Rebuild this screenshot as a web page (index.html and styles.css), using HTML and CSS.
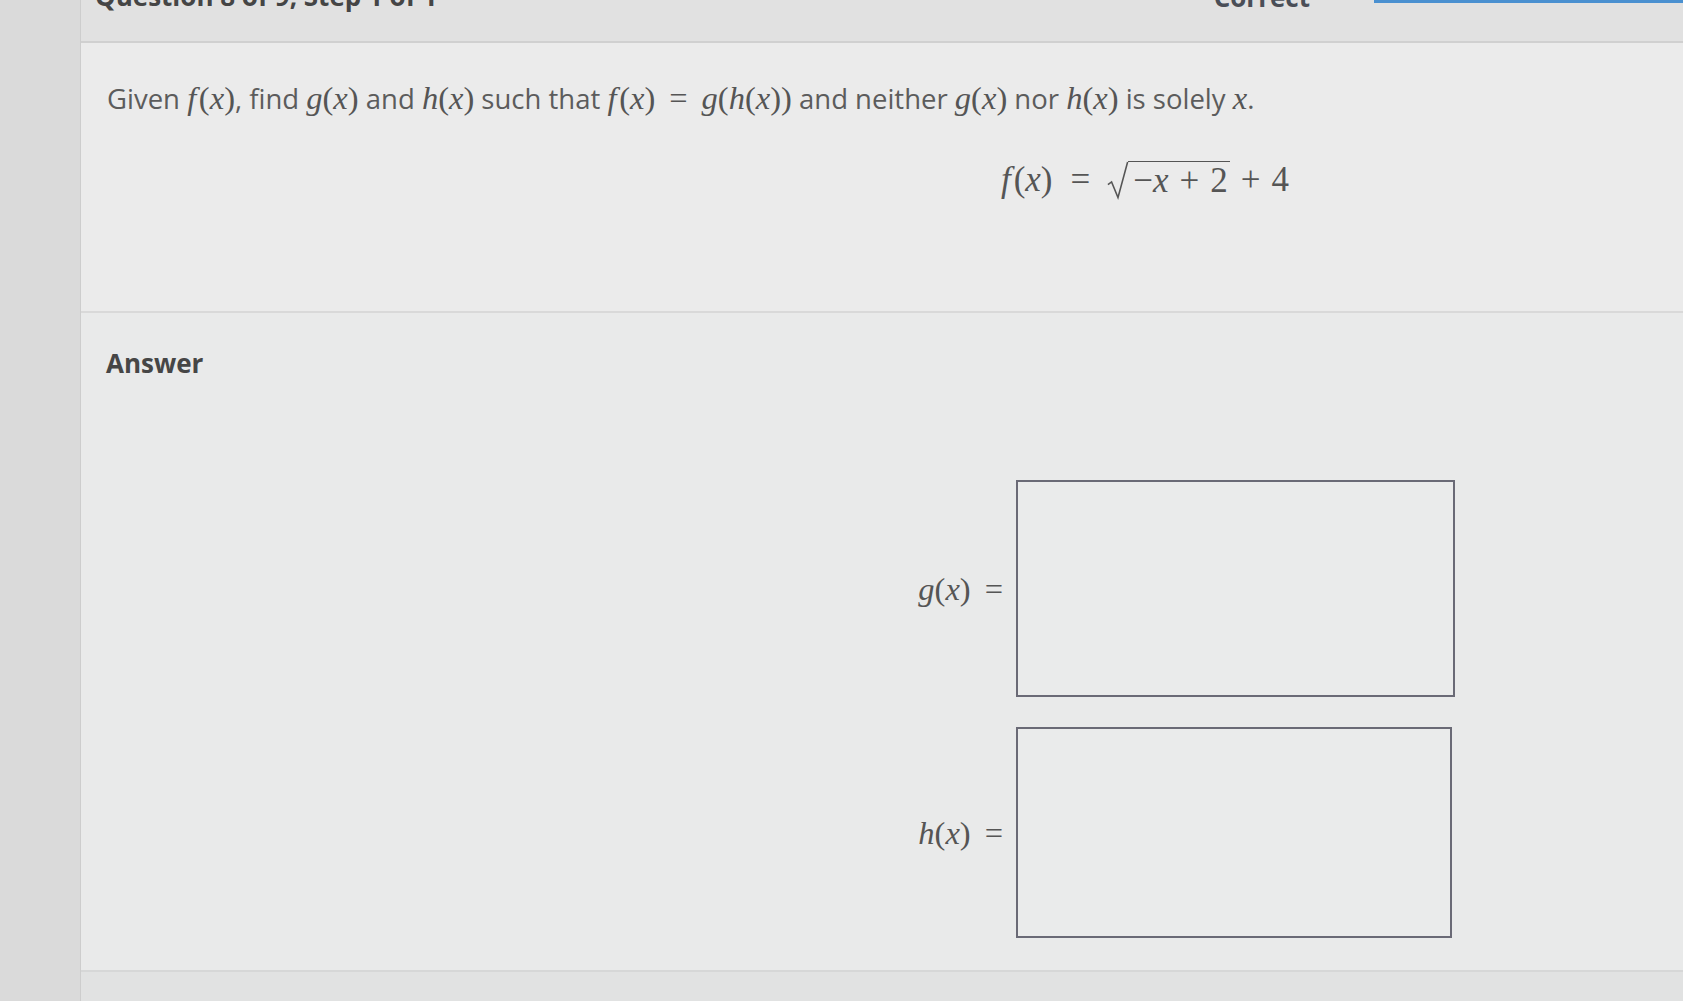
FILE: index.html
```html
<!DOCTYPE html>
<html lang="en">
<head>
<meta charset="utf-8">
<title>Question 8 of 9</title>
<link rel="stylesheet" href="styles.css">
</head>
<body>
<div class="page">
  <aside class="rail"></aside>
  <main class="main">
    <header class="topbar">
      <span class="qtitle">Question 8 of 9, Step 1 of 1</span>
      <span class="status">Correct</span>
      <span class="progress"></span>
    </header>
    <section class="question">
      <p class="prompt">Given <span class="m"><i>f</i>&#8202;(<i>x</i>)</span>, find <span class="m"><i>g</i>(<i>x</i>)</span> and <span class="m"><i>h</i>(<i>x</i>)</span> such that <span class="m"><i>f</i>&#8202;(<i>x</i>)<span class="op">=</span><i>g</i>(<i>h</i>(<i>x</i>))</span> and neither <span class="m"><i>g</i>(<i>x</i>)</span> nor <span class="m"><i>h</i>(<i>x</i>)</span> is solely <span class="m"><i>x</i></span>.</p>
      <div class="formula m">
        <span><i>f</i>&#8202;(<i>x</i>)</span>
        <span class="op">=</span>
        <span class="sqrt"><svg class="rad" viewBox="0 0 24 44" width="22" height="42" aria-hidden="true"><path d="M1 26 L5 23 L12 40 L22.5 1.2" fill="none" stroke="#555" stroke-width="1.7" stroke-linejoin="miter"/></svg><span class="radicand">&minus;<i>x</i><span class="bop">+</span>2</span></span>
        <span><span class="bop">+</span>4</span>
      </div>
    </section>
    <section class="answer">
      <h2 class="answer-title">Answer</h2>
      <div class="answers">
        <div class="label m"><i>g</i>(<i>x</i>)<span class="op">=</span></div>
        <div class="box box-g"></div>
        <div class="label m"><i>h</i>(<i>x</i>)<span class="op">=</span></div>
        <div class="box box-h"></div>
      </div>
    </section>
    <footer class="bottom"></footer>
  </main>
</div>
</body>
</html>
```

FILE: styles.css
```css
html, body {
  margin: 0;
  padding: 0;
}

body {
  width: 1683px;
  height: 1001px;
  overflow: hidden;
  background: #e6e7e7;
  font-family: "Open Sans", "Liberation Sans", sans-serif;
  color: #585858;
}

.page {
  display: flex;
  height: 1001px;
}

.rail {
  width: 80px;
  flex: 0 0 80px;
  background: #dadada;
  border-right: 1px solid #cdcdcd;
}

.main {
  flex: 1;
  display: flex;
  flex-direction: column;
  background: #e9eaea;
}

.topbar {
  height: 41px;
  flex: 0 0 41px;
  display: flex;
  align-items: flex-start;
  background: #e1e1e1;
  border-bottom: 2px solid #d0d0d0;
  padding-left: 14px;
  overflow: hidden;
}

.qtitle {
  font-weight: 700;
  font-size: 26px;
  line-height: 30px;
  margin-top: -19px;
  color: #454545;
  white-space: nowrap;
}

.status {
  margin-left: auto;
  font-weight: 700;
  font-size: 26px;
  line-height: 30px;
  margin-top: -18px;
  color: #4a4e57;
}

.progress {
  width: 309px;
  height: 3px;
  margin-left: 64px;
  background: #4a90d0;
}

.question {
  height: 270px;
  flex: 0 0 270px;
  box-sizing: border-box;
  padding: 34px 0 0 26px;
  background: #ebebeb;
  border-bottom: 2px solid #d9d9d9;
}

.prompt {
  margin: 0;
  font-size: 27.5px;
  line-height: 42px;
  color: #5c5c5c;
  white-space: nowrap;
}

.m {
  font-family: "Liberation Serif", "Times New Roman", serif;
  font-size: 32.5px;
  color: #555;
}

.m i {
  font-style: italic;
}

.op {
  padding: 0 14px;
}

.bop {
  padding: 0 11px;
}

.formula {
  display: flex;
  align-items: flex-end;
  gap: 0;
  margin-top: 32px;
  padding-left: 894px;
  height: 48px;
  line-height: 40px;
  font-size: 35px;
  white-space: nowrap;
}

.formula .op {
  padding: 0 17px 0 18px;
}

.sqrt {
  display: inline-flex;
  align-items: flex-end;
}

.rad {
  display: block;
  margin-bottom: -2px;
  margin-right: -1px;
}

.radicand {
  border-top: 1.7px solid #555;
  padding: 0 2px 0 5px;
  line-height: 38px;
}

.answer {
  flex: 0 0 659px;
  height: 659px;
  box-sizing: border-box;
  padding: 33px 0 0 25px;
  background: #e9eaea;
  border-bottom: 2px solid #d6d7d7;
}

.answer-title {
  margin: 0;
  font-size: 26px;
  line-height: 34px;
  font-weight: 700;
  color: #464646;
}

.answers {
  display: grid;
  grid-template-columns: 91px 439px;
  column-gap: 13px;
  row-gap: 30px;
  margin-top: 100px;
  margin-left: 806px;
  align-items: center;
}

.label {
  text-align: right;
  white-space: nowrap;
  line-height: 40px;
}

.label .op {
  padding: 0 0 0 14px;
}

.box {
  box-sizing: border-box;
  border: 2px solid #6a6a76;
  background: #eaebeb;
}

.box-g {
  height: 217px;
}

.box-h {
  height: 211px;
  width: 436px;
}

.bottom {
  flex: 1;
  background: #e1e2e2;
}
```
